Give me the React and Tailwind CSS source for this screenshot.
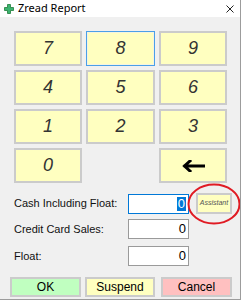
import React from "react";

const keyBase =
  "flex items-center justify-center h-[35px] bg-[#ffffc0] text-[18px] italic text-[#333333]";

function KeyButton({ label, focused }) {
  return (
    <button
      type="button"
      className={`${keyBase} ${
        focused
          ? "border border-[#4a9fe8] shadow-[inset_0_0_0_1px_#f4f4e0]"
          : "border-2 border-[#cbcbcb]"
      }`}
    >
      {label}
    </button>
  );
}

function BackArrow() {
  return (
    <svg width="23" height="12" viewBox="0 0 23 12" fill="none">
      <path
        d="M22 6H3M8 1L2.5 6L8 11"
        stroke="#000000"
        strokeWidth="3"
        strokeLinecap="square"
      />
    </svg>
  );
}

function AppIcon() {
  return (
    <svg width="10" height="10" viewBox="0 0 10 10">
      <path
        d="M3.5 0.5h3v3h3v3h-3v3h-3v-3h-3v-3h3z"
        fill="#3cb371"
        stroke="#1e7d3a"
        strokeWidth="0.8"
      />
    </svg>
  );
}

function CloseIcon() {
  return (
    <svg width="8" height="8" viewBox="0 0 8 8">
      <path d="M0.5 0.5L7.5 7.5M7.5 0.5L0.5 7.5" stroke="#222222" strokeWidth="1" />
    </svg>
  );
}

function FieldRow({ label, value, selected, children, className }) {
  return (
    <div className={`relative flex items-center ${className}`}>
      <span className="w-[114px] text-[11px] text-[#111111]">{label}</span>
      <div
        className={`flex h-[20px] w-[61px] items-center justify-end bg-white pr-[2px] text-[13px] text-black border ${
          selected ? "border-[#0078d7]" : "border-[#9a9a9a]"
        }`}
      >
        {selected ? (
          <span className="bg-[#0078d7] px-[1px] leading-[14px] text-white">{value}</span>
        ) : (
          <span>{value}</span>
        )}
      </div>
      {children}
    </div>
  );
}

export default function App() {
  const keys = ["7", "8", "9", "4", "5", "6", "1", "2", "3"];

  return (
    <div className="relative h-[300px] w-[241px] overflow-hidden border-r border-b border-[#9c9c9c] bg-[#f0f0f0] font-['Liberation_Sans',Arial,sans-serif]">
      {/* title bar */}
      <div className="flex h-[17px] items-center bg-white pl-[4px] pr-[6px]">
        <AppIcon />
        <span className="ml-[4px] text-[11px] text-black font-['Noto_Sans',sans-serif]">
          Zread Report
        </span>
        <div className="ml-auto">
          <CloseIcon />
        </div>
      </div>

      {/* keypad */}
      <div className="pl-[14px] pt-[14px]">
        <div className="grid grid-cols-[68px_69px_68px] gap-x-[4px] gap-y-[4px]">
          {keys.map((k) => (
            <KeyButton key={k} label={k} focused={k === "8"} />
          ))}
          <KeyButton label="0" />
          <div />
          <KeyButton label={<BackArrow />} />
        </div>

        {/* fields */}
        <FieldRow
          label="Cash Including Float:"
          value="0"
          selected
          className="mt-[10px] h-[21px]"
        >
          <button
            type="button"
            className="ml-[7px] flex h-[21px] w-[36px] items-center justify-center border-2 border-[#cbcbcb] bg-[#ffffc0] text-[7px] italic text-[#555555]"
          >
            Assistant
          </button>
          <svg
            className="absolute left-[173px] top-[-10px]"
            width="54"
            height="42"
            viewBox="0 0 54 42"
            fill="none"
          >
            <ellipse cx="27" cy="21" rx="25.5" ry="19.5" stroke="#e01b24" strokeWidth="2" />
          </svg>
        </FieldRow>
        <FieldRow label="Credit Card Sales:" value="0" className="mt-[5px] h-[20px]" />
        <FieldRow label="Float:" value="0" className="mt-[7px] h-[20px]" />
      </div>

      {/* bottom buttons */}
      <div className="mt-[11px] flex pl-[10px]">
        <button
          type="button"
          className="flex h-[20px] w-[71px] items-center justify-center border-2 border-[#cbcbcb] bg-[#c0ffc0] text-[12px] text-black"
        >
          OK
        </button>
        <button
          type="button"
          className="ml-[4px] flex h-[20px] w-[70px] items-center justify-center border-2 border-[#cbcbcb] bg-[#ffffc0] text-[12px] text-black"
        >
          Suspend
        </button>
        <button
          type="button"
          className="ml-[6px] flex h-[20px] w-[71px] items-center justify-center border-2 border-[#cbcbcb] bg-[#ffc0c0] text-[12px] text-black"
        >
          Cancel
        </button>
      </div>
    </div>
  );
}
